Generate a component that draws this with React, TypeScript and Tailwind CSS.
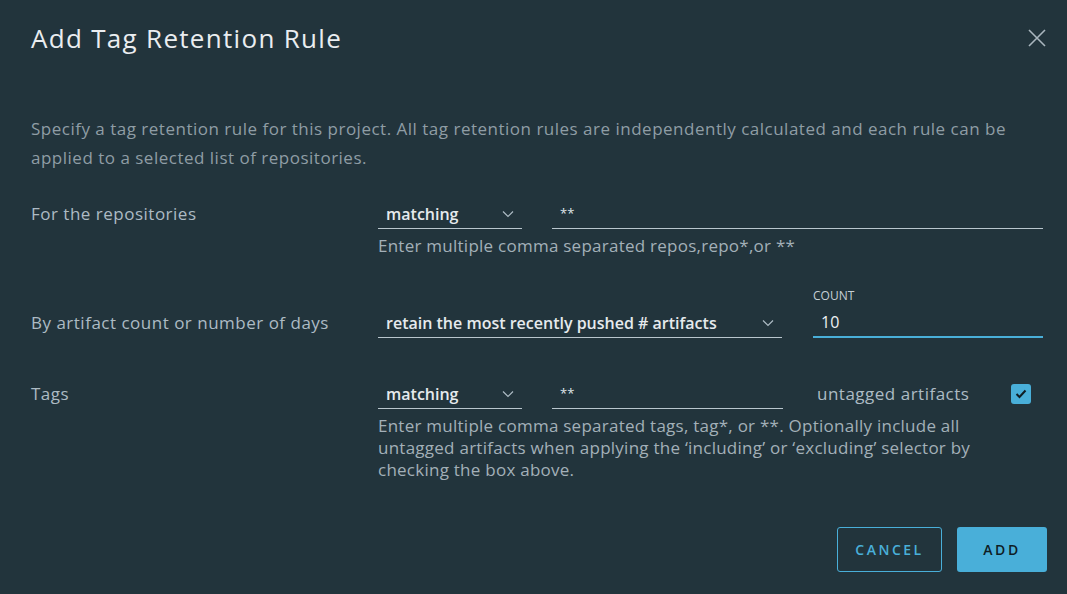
function Chevron() {
  return (
    <svg width="12" height="8" viewBox="0 0 12 8" className="shrink-0">
      <polyline points="1,1.5 6,6.5 11,1.5" fill="none" stroke="#adbbc4" strokeWidth="1.2" />
    </svg>
  );
}

function Select({ value, width }: { value: string; width: string }) {
  return (
    <div className={`flex h-[30px] items-center justify-between border-b border-[#b9c6cd] pl-2 pr-2 ${width}`}>
      <span className="text-[16px] font-semibold text-[#e6eaed]">{value}</span>
      <Chevron />
    </div>
  );
}

function TextInput({ value, width, active }: { value: string; width: string; active?: boolean }) {
  return (
    <div
      className={`flex h-[30px] items-center pl-2 ${width} ${
        active ? "border-b-2 border-[#49afd9]" : "border-b border-[#b9c6cd]"
      }`}
    >
      <span className={active ? "text-[16px] text-[#eef1f3]" : "text-[13px] text-[#dfe4e8]"}>{value}</span>
    </div>
  );
}

export default function App() {
  return (
    <div
      className="h-[594px] w-[1067px] overflow-hidden bg-[#22343c] pl-[31px] pr-[24px] pt-[22px]"
      style={{ fontFamily: '"Open Sans", "Liberation Sans", sans-serif' }}
    >
      <div className="flex items-center justify-between">
        <h2 className="text-[26px] leading-[32px] tracking-[1.3px] text-[#eaedf0]">Add Tag Retention Rule</h2>
        <svg width="18" height="18" viewBox="0 0 18 18" className="-mr-[3px]">
          <path d="M1 1 L17 17 M17 1 L1 17" stroke="#a9b6be" strokeWidth="1.6" />
        </svg>
      </div>

      <p className="mt-[60px] text-[17px] leading-[29px] tracking-[0.5px] text-[#8f9da5]">
        Specify a tag retention rule for this project. All tag retention rules are independently calculated and each rule can be
        applied to a selected list of repositories.
      </p>

      <div className="mt-[27px] flex items-center">
        <div className="w-[347px] text-[17px] tracking-[0.5px] text-[#adbbc4]">For the repositories</div>
        <Select value="matching" width="w-[144px]" />
        <div className="ml-[30px] flex-1">
          <TextInput value="**" width="w-full" />
        </div>
      </div>
      <div className="ml-[347px] mt-[6px] text-[17px] leading-[22px] tracking-[0.25px] text-[#a3b0b8]">
        Enter multiple comma separated repos,repo*,or **
      </div>

      <div className="mt-[31px] flex items-end">
        <div className="flex h-[30px] w-[347px] items-center text-[17px] tracking-[0.5px] text-[#adbbc4]">
          By artifact count or number of days
        </div>
        <Select value="retain the most recently pushed # artifacts" width="w-[404px]" />
        <div className="ml-[31px] flex flex-1 flex-col">
          <span className="mb-[4px] text-[12px] leading-[16px] text-[#c5cfd5]">COUNT</span>
          <TextInput value="10" width="w-full" active />
        </div>
      </div>

      <div className="mt-[41px] flex items-center">
        <div className="w-[347px] text-[17px] tracking-[0.5px] text-[#adbbc4]">Tags</div>
        <Select value="matching" width="w-[144px]" />
        <div className="ml-[30px]">
          <TextInput value="**" width="w-[231px]" />
        </div>
        <div className="ml-[34px] flex w-[214px] items-center justify-between">
          <span className="text-[17px] tracking-[0.5px] text-[#adbbc4]">untagged artifacts</span>
          <span className="flex h-[20px] w-[20px] items-center justify-center rounded-[3px] bg-[#49afd9]">
            <svg width="12" height="10" viewBox="0 0 12 10">
              <polyline points="1.5,5 4.5,8 10.5,1.5" fill="none" stroke="#0f1e25" strokeWidth="2" />
            </svg>
          </span>
        </div>
      </div>
      <div className="ml-[347px] mt-[6px] max-w-[640px] text-[17px] leading-[22px] tracking-[0.25px] text-[#a3b0b8]">
        Enter multiple comma separated tags, tag*, or **. Optionally include all untagged artifacts when applying the
        ‘including’ or ‘excluding’ selector by checking the box above.
      </div>

      <div className="-mr-[4px] mt-[46px] flex justify-end gap-[15px]">
        <button className="h-[45px] w-[105px] rounded-[3px] border border-[#49afd9] text-[14px] font-semibold tracking-[0.18em] text-[#49afd9]">
          CANCEL
        </button>
        <button className="h-[45px] w-[90px] rounded-[3px] bg-[#49afd9] text-[14px] font-semibold tracking-[0.18em] text-[#0f1e25]">
          ADD
        </button>
      </div>
    </div>
  );
}
